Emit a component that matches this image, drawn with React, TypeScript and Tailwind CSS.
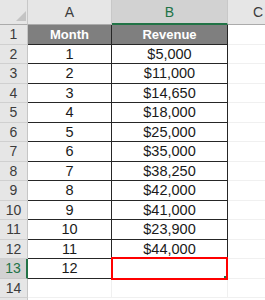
const rows: [string, string][] = [
  ["1", "$5,000"],
  ["2", "$11,000"],
  ["3", "$14,650"],
  ["4", "$18,000"],
  ["5", "$25,000"],
  ["6", "$35,000"],
  ["7", "$38,250"],
  ["8", "$42,000"],
  ["9", "$41,000"],
  ["10", "$23,900"],
  ["11", "$44,000"],
  ["12", ""],
];

function RowHead({ n, active }: { n: number; active?: boolean }) {
  return (
    <div
      className={
        active
          ? "w-[28px] shrink-0 flex items-center justify-center bg-[#d2d2d2] border-r-2 border-r-[#217346] border-b border-b-[#c8c8c8] text-[#217346]"
          : "w-[28px] shrink-0 flex items-center justify-center bg-[#e6e6e6] border-r border-r-[#c6c6c6] border-b border-b-[#d0d0d0] text-[#3c3c3c]"
      }
    >
      {n}
    </div>
  );
}

export default function App() {
  return (
    <div className="w-[265px] h-[300px] overflow-hidden bg-white text-[14px] font-['Liberation_Sans',Arial,sans-serif] leading-none">
      {/* column headers */}
      <div className="flex h-[25px]">
        <div className="relative w-[28px] shrink-0 bg-[#e6e6e6] border-r border-r-[#c8c8c8] border-b border-b-[#ababab]">
          <svg className="absolute left-0 top-0" width="28" height="25" viewBox="0 0 28 25">
            <polygon points="16,21 26,11 26,21" fill="#c4c4c4" />
          </svg>
        </div>
        <div className="w-[84px] shrink-0 flex items-center justify-center bg-[#e6e6e6] border-r border-r-[#c8c8c8] border-b border-b-[#ababab] text-[#3c3c3c]">
          A
        </div>
        <div className="w-[116px] shrink-0 flex items-center justify-center bg-[#d2d2d2] border-r border-r-[#c8c8c8] border-b-2 border-b-[#217346] text-[#217346]">
          B
        </div>
        <div className="w-[60px] shrink-0 flex items-center justify-center bg-[#e6e6e6] border-b border-b-[#ababab] text-[#3c3c3c]">
          C
        </div>
      </div>

      {/* row 1: table header */}
      <div className="flex h-[19.5px]">
        <RowHead n={1} />
        <div className="w-[84px] shrink-0 flex items-center justify-center bg-[#7f7f7f] border-b border-r border-[#262626] text-white font-bold text-[13px]">
          Month
        </div>
        <div className="w-[116px] shrink-0 flex items-center justify-center bg-[#7f7f7f] border-b border-r border-[#262626] text-white font-bold text-[13px]">
          Revenue
        </div>
        <div className="w-[60px] shrink-0 border-b border-b-[#f0f0f0]" />
      </div>

      {rows.map(([m, r], i) => {
        const last = i === rows.length - 1;
        return (
          <div key={i} className="flex h-[19.5px]">
            <RowHead n={i + 2} active={last} />
            <div className="w-[84px] shrink-0 flex items-center justify-center border-b border-r border-[#262626] text-[#1a1a1a] text-[14.5px]">
              {m}
            </div>
            <div className="relative w-[116px] shrink-0 flex items-center justify-center border-b border-r border-[#262626] text-[#1a1a1a] text-[14.5px]">
              {r}
              {last && (
                <div className="absolute -left-[1px] -top-[2px] -right-[1px] -bottom-[2px] border-2 border-[#ff0000]">
                  <div className="absolute right-0 bottom-0 w-[2px] h-[2px] bg-[#217346]" />
                </div>
              )}
            </div>
            <div className="w-[60px] shrink-0 border-b border-b-[#f0f0f0]" />
          </div>
        );
      })}

      {/* row 14 */}
      <div className="flex h-[19.5px]">
        <RowHead n={14} />
        <div className="w-[84px] shrink-0 border-b border-r border-[#f0f0f0]" />
        <div className="w-[116px] shrink-0 border-b border-r border-[#f0f0f0]" />
        <div className="w-[60px] shrink-0 border-b border-b-[#f0f0f0]" />
      </div>
      <div className="flex h-[19.5px]">
        <div className="w-[28px] shrink-0 bg-[#e6e6e6] border-r border-r-[#c6c6c6]" />
      </div>
    </div>
  );
}
